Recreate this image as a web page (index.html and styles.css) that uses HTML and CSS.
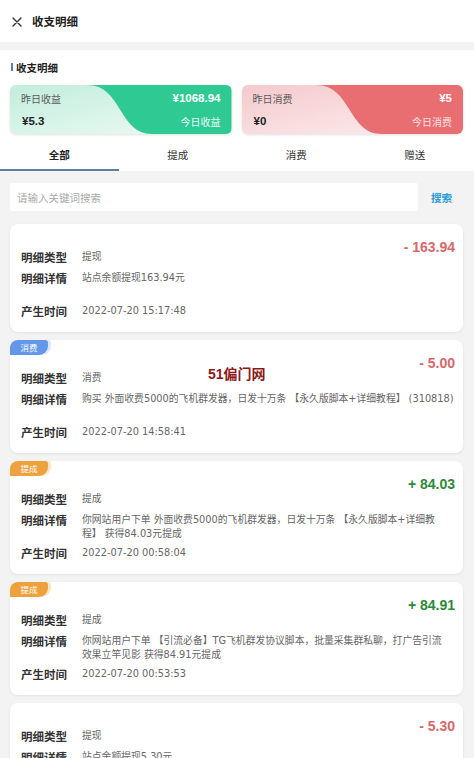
FILE: index.html
```html
<!DOCTYPE html>
<html lang="zh-CN">
<head>
<meta charset="utf-8">
<title>收支明细</title>
<link rel="stylesheet" href="styles.css">
</head>
<body>
<header class="topbar">
  <svg class="close-icon" width="10" height="10" viewBox="0 0 10 10"><path d="M1 1 L9 9 M9 1 L1 9" stroke="#333" stroke-width="1.4" stroke-linecap="round"/></svg>
  <span class="topbar-title">收支明细</span>
</header>

<section class="summary">
  <div class="section-title"><i class="section-bar"></i>收支明细</div>
  <div class="stats">
    <div class="stat">
      <svg class="stat-bg" viewBox="0 0 221 49" preserveAspectRatio="none">
        <defs>
          <linearGradient id="gGreen" x1="0" y1="0" x2="1" y2="1">
            <stop offset="0" stop-color="#c2eddc"/>
            <stop offset="1" stop-color="#effbf6"/>
          </linearGradient>
        </defs>
        <rect width="221" height="49" fill="url(#gGreen)"/>
        <path d="M77 0 C112 0 108 49 142 49 L221 49 L221 0 Z" fill="#2fc994"/>
      </svg>
      <div class="stat-row">
        <span class="stat-label">昨日收益</span>
        <span class="stat-today">¥1068.94</span>
      </div>
      <div class="stat-row">
        <span class="stat-yest">¥5.3</span>
        <span class="stat-today-label green-label">今日收益</span>
      </div>
    </div>
    <div class="stat">
      <svg class="stat-bg" viewBox="0 0 222 49" preserveAspectRatio="none">
        <defs>
          <linearGradient id="gRed" x1="0" y1="0" x2="1" y2="1">
            <stop offset="0" stop-color="#f4cacd"/>
            <stop offset="1" stop-color="#fdeeef"/>
          </linearGradient>
        </defs>
        <rect width="222" height="49" fill="url(#gRed)"/>
        <path d="M74 0 C110 0 106 49 140 49 L222 49 L222 0 Z" fill="#e86e71"/>
      </svg>
      <div class="stat-row">
        <span class="stat-label">昨日消费</span>
        <span class="stat-today">¥5</span>
      </div>
      <div class="stat-row">
        <span class="stat-yest">¥0</span>
        <span class="stat-today-label red-label">今日消费</span>
      </div>
    </div>
  </div>
  <nav class="tabs">
    <span class="tab tab-active">全部</span>
    <span class="tab">提成</span>
    <span class="tab">消费</span>
    <span class="tab">赠送</span>
  </nav>
</section>

<main class="content">
  <div class="search">
    <input class="search-input" type="text" placeholder="请输入关键词搜索">
    <span class="search-btn">搜索</span>
  </div>

  <div class="list">
    <div class="card card-plain">
      <div class="card-head">
        <span class="amount minus">- 163.94</span>
      </div>
      <div class="row"><span class="label">明细类型</span><span class="value">提现</span></div>
      <div class="row row-detail"><span class="label">明细详情</span><span class="value">站点余额提现163.94元</span></div>
      <div class="row row-time"><span class="label">产生时间</span><span class="value">2022-07-20 15:17:48</span></div>
    </div>

    <div class="card">
      <div class="card-head">
        <span class="badge badge-blue">消费</span>
        <span class="amount minus">- 5.00</span>
      </div>
      <div class="row"><span class="label">明细类型</span><span class="value">消费</span></div>
      <div class="row row-detail"><span class="label">明细详情</span><span class="value">购买 外面收费5000的飞机群发器，日发十万条 【永久版脚本+详细教程】 (310818)</span></div>
      <div class="row row-time"><span class="label">产生时间</span><span class="value">2022-07-20 14:58:41</span></div>
    </div>

    <div class="card">
      <div class="card-head">
        <span class="badge badge-orange">提成</span>
        <span class="amount plus">+ 84.03</span>
      </div>
      <div class="row"><span class="label">明细类型</span><span class="value">提成</span></div>
      <div class="row row-detail"><span class="label">明细详情</span><span class="value">你网站用户下单 外面收费5000的飞机群发器，日发十万条 【永久版脚本+详细教<br>程】 获得84.03元提成</span></div>
      <div class="row row-time"><span class="label">产生时间</span><span class="value">2022-07-20 00:58:04</span></div>
    </div>

    <div class="card">
      <div class="card-head">
        <span class="badge badge-orange">提成</span>
        <span class="amount plus">+ 84.91</span>
      </div>
      <div class="row"><span class="label">明细类型</span><span class="value">提成</span></div>
      <div class="row row-detail"><span class="label">明细详情</span><span class="value">你网站用户下单 【引流必备】TG飞机群发协议脚本，批量采集群私聊，打广告引流<br>效果立竿见影 获得84.91元提成</span></div>
      <div class="row row-time"><span class="label">产生时间</span><span class="value">2022-07-20 00:53:53</span></div>
    </div>

    <div class="card card-plain">
      <div class="card-head">
        <span class="amount minus">- 5.30</span>
      </div>
      <div class="row"><span class="label">明细类型</span><span class="value">提现</span></div>
      <div class="row row-detail"><span class="label">明细详情</span><span class="value">站点余额提现5.30元</span></div>
      <div class="row row-time"><span class="label">产生时间</span><span class="value">2022-07-20 00:40:12</span></div>
    </div>
  </div>
</main>

<div class="watermark">51偏门网</div>
</body>
</html>
```

FILE: styles.css
```css
* { box-sizing: border-box; }

body {
  margin: 0;
  background: #f3f3f3;
  font-family: "Liberation Sans", "Noto Sans CJK SC", sans-serif;
  color: #333;
  position: relative;
}

.topbar {
  height: 42px;
  background: #fff;
  display: flex;
  align-items: center;
  padding-left: 12px;
}
.close-icon { display: block; margin-top: 1px; }
.topbar-title {
  margin-left: 10px;
  font-size: 11.5px;
  font-weight: bold;
  color: #222;
  font-family: "Noto Sans CJK SC", sans-serif;
}

.summary {
  margin-top: 8px;
  background: #fff;
  padding-top: 10px;
}
.section-title {
  display: flex;
  align-items: center;
  height: 14px;
  padding-left: 11px;
  font-size: 10.5px;
  font-weight: bold;
  color: #222;
  font-family: "Noto Sans CJK SC", sans-serif;
}
.section-bar {
  display: block;
  width: 2px;
  height: 8px;
  background: #5f7ca6;
  margin-right: 3px;
}

.stats {
  display: flex;
  gap: 10px;
  padding: 0 11px 0 10px;
  margin-top: 11px;
}
.stat {
  flex: 1;
  height: 49px;
  border-radius: 6px;
  overflow: hidden;
  position: relative;
  display: flex;
  flex-direction: column;
  justify-content: space-between;
  padding: 5px 11px 5px 11px;
  box-shadow: 0 1px 3px rgba(0,0,0,0.12);
}
.stat-bg {
  position: absolute;
  left: 0; top: 0;
  width: 100%; height: 100%;
  z-index: 0;
}
.stat-row {
  position: relative;
  z-index: 1;
  display: flex;
  justify-content: space-between;
  align-items: center;
  height: 16px;
}
.stat-label {
  font-size: 10px;
  color: #5a5a5a;
  font-family: "Noto Sans CJK SC", sans-serif;
}
.stat-today {
  font-size: 11.5px;
  font-weight: bold;
  color: #fff;
}
.stat-yest {
  font-size: 11.5px;
  font-weight: bold;
  color: #222;
  padding-left: 1px;
}
.stat-today-label {
  font-size: 10px;
  font-family: "Noto Sans CJK SC", sans-serif;
}
.green-label { color: #eafff6; }
.red-label { color: #fde4e5; }

.tabs {
  display: flex;
  margin-top: 3px;
}
.tab {
  flex: 1;
  height: 34px;
  display: flex;
  align-items: center;
  justify-content: center;
  font-size: 10.5px;
  color: #333;
  font-family: "Noto Sans CJK SC", sans-serif;
  position: relative;
}
.tab-active {
  font-weight: bold;
  color: #222;
  border-bottom: 2px solid #5d7da9;
  padding-top: 2px;
}

.content {
  padding: 12px 11px 0 10px;
}
.search {
  display: flex;
  align-items: center;
  height: 28px;
}
.search-input {
  width: 408px;
  height: 28px;
  border: none;
  outline: none;
  background: #fff;
  padding: 0 7px;
  font-size: 10.5px;
  font-family: "Noto Sans CJK SC", sans-serif;
  color: #333;
  border-radius: 2px;
}
.search-input::placeholder { color: #a9a9a9; }
.search-btn {
  flex: 1;
  text-align: center;
  font-size: 10.5px;
  font-weight: bold;
  color: #2b9bd9;
  font-family: "Noto Sans CJK SC", sans-serif;
  padding-left: 2px;
}

.list {
  margin-top: 13px;
  display: flex;
  flex-direction: column;
  gap: 8px;
}
.card {
  background: #fff;
  border-radius: 8px;
  padding: 0 8px 14px 11px;
  box-shadow: 0 1px 3px rgba(0,0,0,0.07);
}
.card-head {
  display: flex;
  justify-content: space-between;
  align-items: flex-start;
  height: 31px;
}
.card-plain .card-head {
  height: 26px;
  justify-content: flex-end;
}
.badge {
  margin-left: -11px;
  width: 38px;
  height: 15px;
  line-height: 15px;
  text-align: center;
  font-size: 8.5px;
  color: #fff;
  font-family: "Noto Sans CJK SC", sans-serif;
  border-radius: 8px 3px 9px 0;
}
.badge-blue {
  background: #6397e7;
  box-shadow: 3px 0 0 #dde8fa;
}
.badge-orange {
  background: #eda23e;
  box-shadow: 3px 0 0 #fbe6c6;
}
.amount {
  margin-top: 15px;
  line-height: 16px;
  font-size: 14px;
  font-weight: bold;
}
.minus { color: #d6686c; }
.plus { color: #2b8a36; }

.row {
  display: flex;
  line-height: 14px;
}
.row + .row { margin-top: 7px; }
.row-detail { min-height: 28px; }
.row.row-time { margin-top: 5px; }
.label {
  flex: 0 0 61px;
  font-size: 11.5px;
  font-weight: bold;
  color: #333;
  font-family: "Noto Sans CJK SC", sans-serif;
}
.value {
  flex: 1;
  font-size: 9.8px;
  color: #666;
  font-family: "DejaVu Sans", "Noto Sans CJK SC", sans-serif;
}

.watermark {
  position: absolute;
  left: 208px;
  top: 363px;
  font-size: 14px;
  font-weight: bold;
  color: #8a1818;
  font-family: "Liberation Sans", "Noto Sans CJK SC", sans-serif;
}
```
